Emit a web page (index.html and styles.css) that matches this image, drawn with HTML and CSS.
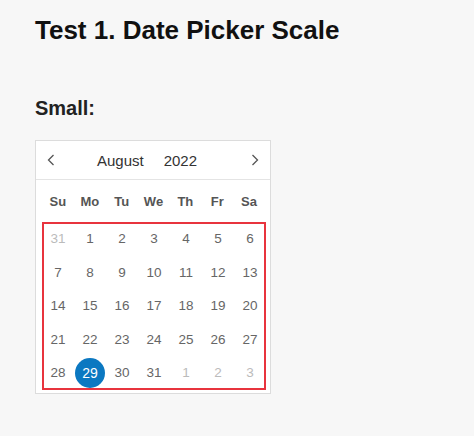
FILE: index.html
```html
<!DOCTYPE html>
<html lang="en">
<head>
<meta charset="utf-8">
<title>Date Picker Scale</title>
<link rel="stylesheet" href="styles.css">
</head>
<body>
<div class="page">
  <h1 class="title">Test 1. Date Picker Scale</h1>
  <h2 class="subtitle">Small:</h2>
  <div class="calendar">
    <div class="cal-header">
      <button class="nav" aria-label="Previous month">
        <svg width="8" height="12" viewBox="0 0 8 12"><path d="M6.5 1 L1.5 6 L6.5 11" fill="none" stroke="#555" stroke-width="1.3"/></svg>
      </button>
      <div class="cal-title"><span>August</span><span>2022</span></div>
      <button class="nav" aria-label="Next month">
        <svg width="8" height="12" viewBox="0 0 8 12"><path d="M1.5 1 L6.5 6 L1.5 11" fill="none" stroke="#555" stroke-width="1.3"/></svg>
      </button>
    </div>
    <div class="weekdays">
      <span>Su</span><span>Mo</span><span>Tu</span><span>We</span><span>Th</span><span>Fr</span><span>Sa</span>
    </div>
    <div class="days">
      <span class="other">31</span><span>1</span><span>2</span><span>3</span><span>4</span><span>5</span><span>6</span>
      <span>7</span><span>8</span><span>9</span><span>10</span><span>11</span><span>12</span><span>13</span>
      <span>14</span><span>15</span><span>16</span><span>17</span><span>18</span><span>19</span><span>20</span>
      <span>21</span><span>22</span><span>23</span><span>24</span><span>25</span><span>26</span><span>27</span>
      <span>28</span><span class="selected"><b>29</b></span><span>30</span><span>31</span><span class="other">1</span><span class="other">2</span><span class="other">3</span>
    </div>
  </div>
</div>
</body>
</html>
```
FILE: styles.css
```css
html { background: #ffffff; }
body {
  margin: 0;
  font-family: "Liberation Sans", Arial, sans-serif;
}
.page {
  background: #f7f7f7;
  height: 436px;
  padding: 16px 0 0 35px;
  box-sizing: border-box;
}
.title {
  margin: 0;
  font-size: 26px;
  line-height: 29px;
  font-weight: bold;
  color: #111;
}
.subtitle {
  margin: 52px 0 0;
  font-size: 20px;
  line-height: 23px;
  font-weight: bold;
  color: #222;
}
.calendar {
  margin-top: 20px;
  width: 236px;
  box-sizing: border-box;
  background: #fff;
  border: 1px solid #dcdcdc;
  padding-bottom: 3px;
}
.cal-header {
  display: flex;
  align-items: center;
  height: 38px;
  border-bottom: 1px solid #e4e4e4;
}
.nav {
  width: 30px;
  height: 38px;
  padding: 0;
  border: 0;
  background: none;
  display: flex;
  align-items: center;
  justify-content: center;
}
.cal-title {
  flex: 1;
  display: flex;
  justify-content: center;
  gap: 20px;
  padding-right: 12px;
  font-size: 15px;
  color: #333;
}
.weekdays {
  display: grid;
  grid-template-columns: repeat(7, 1fr);
  height: 42px;
  align-items: center;
  padding: 0 5px 0 6px;
  font-size: 13px;
  font-weight: bold;
  color: #555;
  text-align: center;
}
.days {
  display: grid;
  grid-template-columns: repeat(7, 1fr);
  grid-auto-rows: 33.5px;
  margin: 0 4px 0 6px;
  outline: 2px solid #e8343e;
  outline-offset: -2px;
  font-size: 13.5px;
  color: #666;
  text-align: center;
}
.days span {
  display: flex;
  align-items: center;
  justify-content: center;
}
.days .other { color: #bbb; }
.days .selected b {
  font-weight: normal;
  width: 30px;
  height: 30px;
  border-radius: 50%;
  background: #0b78c1;
  color: #fff;
  font-size: 14px;
  display: flex;
  align-items: center;
  justify-content: center;
}
```
